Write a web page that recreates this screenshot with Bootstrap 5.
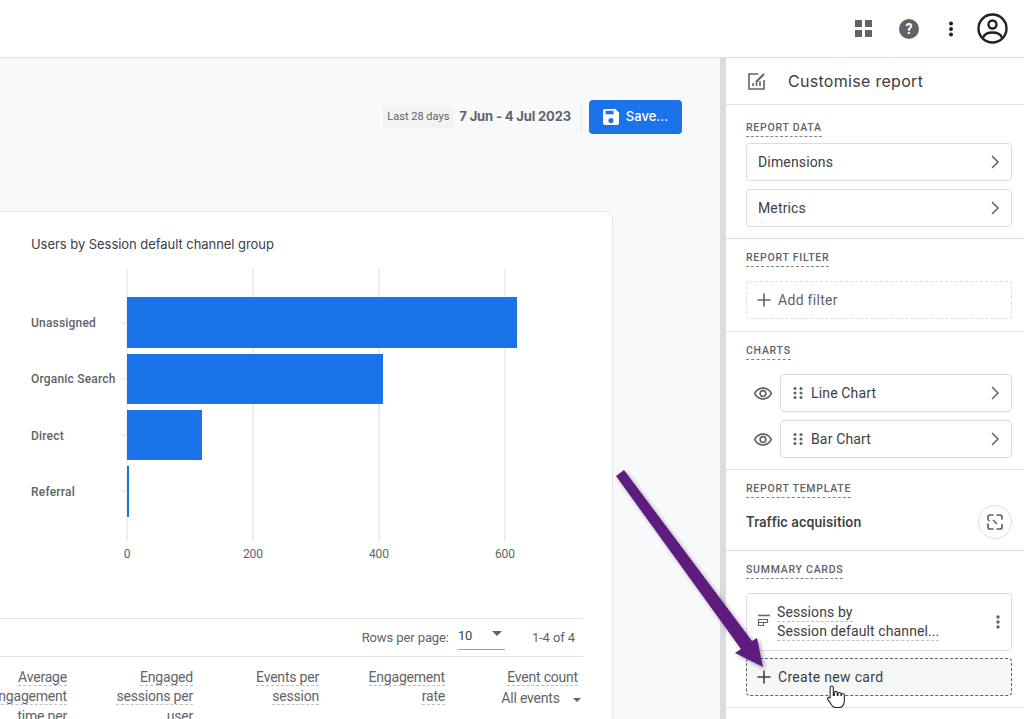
<!DOCTYPE html>
<html lang="en">

<head>
  <meta charset="UTF-8">
  <meta name="viewport" content="width=device-width, initial-scale=1.0">
  <title>Customise report</title>
  <link href="https://cdn.jsdelivr.net/npm/bootstrap@5.3.2/dist/css/bootstrap.min.css" rel="stylesheet">
  <style>
    html, body { height: 719px; overflow: hidden; }
    body { font-family: Roboto, sans-serif; color: #3c4043; background: #fff; }

    .top-bar { height: 58px; border-bottom: 1px solid #e0e0e0; padding-right: 16px; }
    .page-wrap { height: 661px; }

    .report-side { width: 720px; background: #f8f9fa; padding-top: 42px; }
    .save-row { height: 34px; margin-right: 38px; }
    .chip-days { background: #f1f3f4; font-size: 11px; color: #5f6368; height: 22px; width: 70px; margin-right: 6px; }
    .date-range { font-size: 13px; font-weight: 700; color: #5f6368; font-family: Inter, sans-serif; letter-spacing: -.15px; }
    .v-rule { width: 1px; height: 34px; background: #e8eaed; margin: 0 7px 0 10px; }
    .save-btn { width: 93px; height: 34px; background: #1a73e8; border-radius: 4px; color: #fff; font-size: 13px; font-weight: 500; font-family: Inter, sans-serif; gap: 7px; padding: 0; border: 0; }

    .chart-box { margin: 77px 0 0 -10px; width: 623px; height: 520px; background: #fff; border: 1px solid #e4e6e8; border-radius: 8px; overflow: hidden; }
    .chart-title { padding: 23px 0 0 40px; font-size: 13px; line-height: 18px; color: #3c4043; font-family: Inter, sans-serif; letter-spacing: -.05px; }
    .chart-svg { display: block; }
    .chart-svg text { font-family: Roboto, sans-serif; font-size: 12px; fill: #5f6368; }
    .chart-svg .bar-lbl { font-weight: 500; letter-spacing: .2px; }

    .pager-row { height: 39px; margin-right: 29px; border-top: 1px solid #e0e0e0; border-bottom: 1px solid #e0e0e0; font-size: 13px; letter-spacing: -.1px; color: #5f6368; padding-right: 8px; }
    .rows-select { width: 47px; height: 24px; margin: 0 27px 0 9px; border-bottom: 1px solid #9aa0a6; position: relative; color: #3c4043; }
    .rows-select i { position: absolute; right: 3px; top: 5px; border: 5px solid transparent; border-top-color: #5f6368; border-bottom: 0; }

    .col-heads { margin-right: 34px; justify-content: flex-end; padding-top: 12px; }
    .col-head { width: 126px; flex: none; text-align: right; font-size: 14px; line-height: 19px; color: #5f6368; letter-spacing: -.2px; }
    .col-head.last-col { width: 133px; }
    .col-head span { border-bottom: 1px dashed #bdc1c6; display: table; margin-left: auto; line-height: 16px; margin-bottom: 2px; white-space: nowrap; }
    .all-events { line-height: 20px; }
    .all-events i { display: inline-block; border: 4px solid transparent; border-top-color: #5f6368; border-bottom: 0; margin: 0 -3px 1px 10px; }

    .v-gutter { width: 6px; background: #dadce0; }
    .side-panel { width: 298px; background: #fff; }
    .panel-head { height: 46px; padding-left: 21px; gap: 21px; font-family: Inter, sans-serif; font-size: 16px; letter-spacing: .3px; color: #3c4043; }
    .panel-sect { padding: 0 12px 0 20px; border-top: 1px solid #e0e0e0; }
    .sect-lbl { font-size: 10.5px; font-weight: 500; letter-spacing: .75px; line-height: 12px; color: #5f6368; border-bottom: 1px dashed #80868b; display: inline-block; padding-bottom: 2px; }
    .pick-row { height: 38px; border: 1px solid #dadce0; border-radius: 4px; padding: 0 11px 0 11px; font-size: 14px; letter-spacing: .15px; color: #3c4043; margin-bottom: 8px; }
    .pick-row.charted { flex: 1; padding-left: 12px; gap: 8px; }
    .add-row { height: 38px; border: 1px dashed #dadce0; border-radius: 4px; font-size: 14px; letter-spacing: .3px; color: #5f6368; padding-left: 9px; gap: 6px; }
    .eye-slot { width: 34px; flex: none; padding-left: 7px; }
    .tpl-round { width: 34px; height: 34px; border: 1px solid #e0e0e0; border-radius: 50%; }
    .tpl-name { font-size: 14px; font-weight: 500; letter-spacing: .1px; color: #3c4043; }
    .summary-row { height: 58px; border: 1px solid #dadce0; border-radius: 4px; padding: 0 10px 0 10px; font-size: 14px; letter-spacing: .1px; line-height: 19px; margin-bottom: 7px; gap: 6px; }
    .dash-under { border-bottom: 1px dashed #bdc1c6; line-height: 17px; display: inline-block; }
    .new-card { height: 38px; border: 1px dashed #5f6368; border-radius: 4px; background: #f6f7f7; font-size: 14px; letter-spacing: .3px; color: #3c4043; padding-left: 9px; gap: 6px; }

    .arrow-over { position: absolute; left: 0; top: 0; width: 1024px; height: 719px; pointer-events: none; }
  </style>
</head>

<body>
  <div class="top-bar d-flex align-items-center justify-content-end">
    <svg width="20" height="20" viewBox="0 0 20 20" fill="#5f6368" style="margin-right:25px"><rect x="1" y="1" width="7" height="7"/><rect x="11" y="1" width="7" height="7"/><rect x="1" y="11" width="7" height="7"/><rect x="11" y="11" width="7" height="7"/></svg>
    <svg width="20" height="20" viewBox="0 0 20 20" style="margin-right:29px"><circle cx="10" cy="10" r="10" fill="#5f6368"/><text x="10" y="15" text-anchor="middle" font-family="Roboto, sans-serif" font-weight="700" font-size="14" fill="#fff">?</text></svg>
    <svg width="6" height="16" viewBox="0 0 6 16" fill="#202124" style="margin-right:23px"><circle cx="3" cy="2.500" r="2"/><circle cx="3" cy="8" r="2"/><circle cx="3" cy="13.500" r="2"/></svg>
    <svg width="31" height="31" viewBox="0 0 31 31" fill="none" stroke="#202124" stroke-width="2.400"><circle cx="15.500" cy="15.500" r="14"/><circle cx="15.500" cy="11.500" r="4"/><path d="M6 24.500c1.500-3.500 5.500-5 9.500-5s8 1.500 9.500 5"/></svg>
  </div>

  <div class="page-wrap d-flex">
    <div class="report-side">
      <div class="save-row d-flex align-items-center justify-content-end">
        <div class="chip-days d-flex align-items-center justify-content-center">Last 28 days</div>
        <div class="date-range">7 Jun - 4 Jul 2023</div>
        <div class="v-rule"></div>
        <button class="save-btn btn d-flex align-items-center justify-content-center">
          <svg width="16" height="16" viewBox="3 3 18 18" fill="#fff"><path d="M17 3H5c-1.110 0-2 .9-2 2v14c0 1.100.89 2 2 2h14c1.100 0 2-.9 2-2V7l-4-4zm-5 16c-1.660 0-3-1.340-3-3s1.340-3 3-3 3 1.340 3 3-1.340 3-3 3zm3-10H6V5h9v4z"/></svg>
          Save...
        </button>
      </div>

      <div class="chart-box">
        <div class="chart-title">Users by Session default channel group</div>
        <svg class="chart-svg" width="621" height="365" viewBox="-9 253 621 365">
          <g stroke="#e8eaed" stroke-width="1.500">
            <line x1="127" y1="268" x2="127" y2="541"/><line x1="253" y1="268" x2="253" y2="541"/><line x1="379" y1="268" x2="379" y2="541"/><line x1="505" y1="268" x2="505" y2="541"/>
            <line x1="121" y1="323" x2="127" y2="323"/><line x1="121" y1="379" x2="127" y2="379"/><line x1="121" y1="435" x2="127" y2="435"/><line x1="121" y1="491" x2="127" y2="491"/>
          </g>
          <g fill="#1a73e8">
            <rect x="127" y="297" width="390" height="51"/><rect x="127" y="354" width="256" height="50"/><rect x="127" y="410" width="75" height="50"/><rect x="127" y="466" width="2" height="51"/>
          </g>
          <text class="bar-lbl" x="31" y="327">Unassigned</text>
          <text class="bar-lbl" x="31" y="383">Organic Search</text>
          <text class="bar-lbl" x="31" y="440">Direct</text>
          <text class="bar-lbl" x="31" y="496">Referral</text>
          <g text-anchor="middle"><text x="127" y="558">0</text><text x="253" y="558">200</text><text x="379" y="558">400</text><text x="505" y="558">600</text></g>
        </svg>
        <div class="pager-row d-flex align-items-center justify-content-end">
          <span>Rows per page:</span>
          <div class="rows-select">10<i></i></div>
          <span>1-4 of 4</span>
        </div>
        <div class="col-heads d-flex">
          <div class="col-head"><span>Average</span><span>engagement</span>time per</div>
          <div class="col-head"><span>Engaged</span><span>sessions per</span>user</div>
          <div class="col-head"><span>Events per</span><span>session</span></div>
          <div class="col-head"><span>Engagement</span><span>rate</span></div>
          <div class="col-head last-col"><span>Event count</span><div class="all-events">All events <i></i></div></div>
        </div>
      </div>
    </div>

    <div class="v-gutter"></div>

    <div class="side-panel">
      <div class="panel-head d-flex align-items-center">
        <svg width="20" height="20" viewBox="0 0 20 20" fill="none" stroke="#5f6368" stroke-width="1.600"><path d="M11 3H2v15h15V9"/><path d="M9 11l8-8" stroke-width="2"/><path d="M6 15v-3M9.500 15v-4M13 15v-5" stroke-width="1.500"/></svg>
        <span>Customise report</span>
      </div>

      <div class="panel-sect" style="height:134px">
        <div class="sect-lbl" style="margin:17px 0 6px">REPORT DATA</div>
        <div class="pick-row d-flex align-items-center justify-content-between"><span>Dimensions</span><svg width="10" height="14" viewBox="0 0 10 14" fill="none" stroke="#5f6368" stroke-width="1.500"><path d="M2 1l6 6-6 6"/></svg></div>
        <div class="pick-row d-flex align-items-center justify-content-between"><span>Metrics</span><svg width="10" height="14" viewBox="0 0 10 14" fill="none" stroke="#5f6368" stroke-width="1.500"><path d="M2 1l6 6-6 6"/></svg></div>
      </div>

      <div class="panel-sect" style="height:93px">
        <div class="sect-lbl" style="margin:13px 0 14px">REPORT FILTER</div>
        <div class="add-row d-flex align-items-center">
          <svg width="16" height="16" viewBox="0 0 16 16" stroke="#5f6368" stroke-width="1.600"><path d="M8 1.500v13M1.500 8h13"/></svg>
          <span>Add filter</span>
        </div>
      </div>

      <div class="panel-sect" style="height:138px">
        <div class="sect-lbl" style="margin:13px 0 14px">CHARTS</div>
        <div class="d-flex align-items-center">
          <div class="eye-slot mb-2"><svg width="20" height="20" viewBox="0 0 24 24" fill="#5f6368"><path d="M12 6a9.770 9.770 0 0 1 8.820 5.500C19.170 14.870 15.790 17 12 17s-7.170-2.130-8.820-5.500A9.770 9.770 0 0 1 12 6m0-2C7 4 2.730 7.110 1 11.500 2.730 15.890 7 19 12 19s9.270-3.110 11-7.500C21.270 7.110 17 4 12 4zm0 5a2.500 2.500 0 0 1 0 5 2.500 2.500 0 0 1 0-5m0-2c-2.480 0-4.500 2.020-4.500 4.500S9.520 16 12 16s4.500-2.020 4.500-4.500S14.480 7 12 7z"/></svg></div>
          <div class="pick-row charted d-flex align-items-center">
            <svg width="10" height="14" viewBox="0 0 10 14" fill="#5f6368"><circle cx="2" cy="2.500" r="1.500"/><circle cx="8" cy="2.500" r="1.500"/><circle cx="2" cy="7" r="1.500"/><circle cx="8" cy="7" r="1.500"/><circle cx="2" cy="11.500" r="1.500"/><circle cx="8" cy="11.500" r="1.500"/></svg>
            <span class="flex-grow-1">Line Chart</span>
            <svg width="10" height="14" viewBox="0 0 10 14" fill="none" stroke="#5f6368" stroke-width="1.500"><path d="M2 1l6 6-6 6"/></svg>
          </div>
        </div>
        <div class="d-flex align-items-center">
          <div class="eye-slot mb-2"><svg width="20" height="20" viewBox="0 0 24 24" fill="#5f6368"><path d="M12 6a9.770 9.770 0 0 1 8.820 5.500C19.170 14.870 15.790 17 12 17s-7.170-2.130-8.820-5.500A9.770 9.770 0 0 1 12 6m0-2C7 4 2.730 7.110 1 11.500 2.730 15.890 7 19 12 19s9.270-3.110 11-7.500C21.270 7.110 17 4 12 4zm0 5a2.500 2.500 0 0 1 0 5 2.500 2.500 0 0 1 0-5m0-2c-2.480 0-4.500 2.020-4.500 4.500S9.520 16 12 16s4.500-2.020 4.500-4.500S14.480 7 12 7z"/></svg></div>
          <div class="pick-row charted d-flex align-items-center">
            <svg width="10" height="14" viewBox="0 0 10 14" fill="#5f6368"><circle cx="2" cy="2.500" r="1.500"/><circle cx="8" cy="2.500" r="1.500"/><circle cx="2" cy="7" r="1.500"/><circle cx="8" cy="7" r="1.500"/><circle cx="2" cy="11.500" r="1.500"/><circle cx="8" cy="11.500" r="1.500"/></svg>
            <span class="flex-grow-1">Bar Chart</span>
            <svg width="10" height="14" viewBox="0 0 10 14" fill="none" stroke="#5f6368" stroke-width="1.500"><path d="M2 1l6 6-6 6"/></svg>
          </div>
        </div>
      </div>

      <div class="panel-sect" style="height:81px">
        <div class="sect-lbl" style="margin-top:13px">REPORT TEMPLATE</div>
        <div class="d-flex align-items-center justify-content-between" style="margin-top:6px">
          <span class="tpl-name">Traffic acquisition</span>
          <div class="tpl-round d-flex align-items-center justify-content-center">
            <svg width="18" height="18" viewBox="0 0 18 18" fill="none" stroke="#5f6368" stroke-width="1.700" stroke-linecap="round"><path d="M7 2H4a2 2 0 0 0-2 2v2a2 2 0 0 0 1 1.500M11 2h3a2 2 0 0 1 2 2v2M2 11v3a2 2 0 0 0 2 2h3M16 11.500a2 2 0 0 1 0 .5v2a2 2 0 0 1-2 2h-3M7.500 7.500l3 3"/></svg>
          </div>
        </div>
      </div>

      <div class="panel-sect border-bottom" style="height:158px">
        <div class="sect-lbl" style="margin:13px 0 14px">SUMMARY CARDS</div>
        <div class="summary-row d-flex align-items-center">
          <svg width="14" height="16" viewBox="0 0 14 16" fill="none" stroke="#5f6368" stroke-width="1.200"><path d="M1 1.500h12" stroke-width="1.500"/><path d="M1.500 5.500h9v3h-9zM1.500 8.500h5v3h-5z"/></svg>
          <div class="flex-grow-1"><span class="dash-under">Sessions by</span><br><span class="dash-under">Session default channel...</span></div>
          <svg width="6" height="14" viewBox="0 0 6 14" fill="#5f6368"><circle cx="3" cy="2" r="1.700"/><circle cx="3" cy="7" r="1.700"/><circle cx="3" cy="12" r="1.700"/></svg>
        </div>
        <div class="new-card d-flex align-items-center">
          <svg width="16" height="16" viewBox="0 0 16 16" stroke="#3c4043" stroke-width="1.600"><path d="M8 1.500v13M1.500 8h13"/></svg>
          <span>Create new card</span>
        </div>
      </div>
    </div>
  </div>

  <!-- annotation drawn over the screenshot -->
  <svg class="arrow-over" viewBox="0 0 1024 719">
    <defs><filter id="soft" x="-10%" y="-10%" width="120%" height="120%"><feDropShadow dx="2" dy="2" stdDeviation="2" flood-color="#000" flood-opacity=".35"/></filter></defs>
    <path filter="url(#soft)" fill="#5f1f7f" d="M616 476L624 470L752 641L757 638L763 667L735 653L741 649Z"/>
    <path transform="translate(827 686) scale(1.050)" fill="#fff" stroke="#202124" stroke-width="1" stroke-linejoin="round" d="M3 1.500a1.500 1.500 0 0 1 3 0V9h1V6.500a1.400 1.400 0 0 1 2.800 0V9h.7V7.500a1.400 1.400 0 0 1 2.800 0V9h.6V8.500a1.300 1.300 0 0 1 2.600 0v6c0 3-2 6-5 6H8c-2 0-3-1-4-3L.800 13c-1-2 1-3 2.200-1.500V1.500z"/>
  </svg>

  <script src="https://cdn.jsdelivr.net/npm/bootstrap@5.3.2/dist/js/bootstrap.bundle.min.js"></script>
</body>

</html>
